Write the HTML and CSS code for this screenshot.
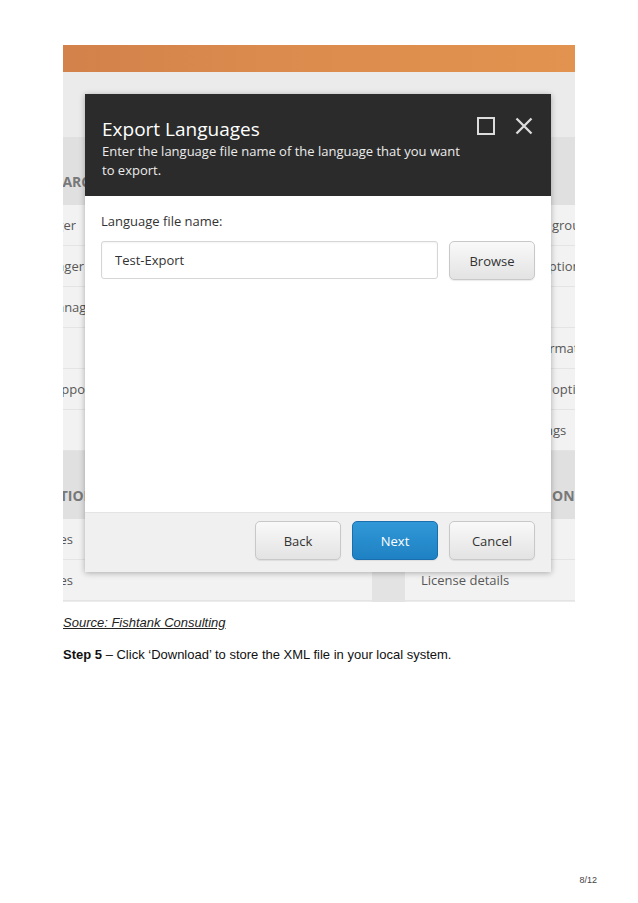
FILE: index.html
```html
<!DOCTYPE html>
<html lang="en">
<head>
    <meta charset="UTF-8">
    <meta name="viewport" content="width=device-width, initial-scale=1.0">
    <title>Step 5 – Export Languages</title>
    <link rel="stylesheet" href="styles.css">
</head>
<body>
    <div class="page">
        <div class="shot">
            <div class="topbar"></div>
            <div class="ribbon"></div>
            <div class="panels">
                <div class="col left">
                    <div class="head"><span class="lbl w-search">SEARCH</span></div>
                    <div class="row"><span class="lbl w-role">Role Manager</span></div>
                    <div class="row"><span class="lbl w-domain">Domain Manager</span></div>
                    <div class="row"><span class="lbl w-security">Security Manager</span></div>
                    <div class="row"></div>
                    <div class="row"><span class="lbl w-support">Support</span></div>
                    <div class="row"></div>
                    <div class="head"><span class="lbl w-local">LOCALIZATION</span></div>
                    <div class="row"><span class="lbl w-es">Roles</span></div>
                    <div class="row"><span class="lbl w-es">Files</span></div>
                </div>
                <div class="gutter"></div>
                <div class="col right">
                    <div class="head"></div>
                    <div class="row"><span class="tail at-groups">groups</span></div>
                    <div class="row"><span class="tail at-options">options</span></div>
                    <div class="row"></div>
                    <div class="row"><span class="tail at-formats">formats</span></div>
                    <div class="row"><span class="tail at-groups">options</span></div>
                    <div class="row"><span class="tail at-settings">settings</span></div>
                    <div class="head"><span class="tail at-groups">ON</span></div>
                    <div class="row"></div>
                    <div class="row">License details</div>
                </div>
            </div>

            <div class="dialog">
                <div class="dialog-head">
                    <div class="dialog-titles">
                        <h1 class="dialog-title">Export Languages</h1>
                        <p class="dialog-sub">Enter the language file name of the language that you want to export.</p>
                    </div>
                    <div class="dialog-tools">
                        <svg width="18" height="18" viewBox="0 0 18 18"><rect x="1" y="1" width="16" height="16" fill="none" stroke="#dcdcdc" stroke-width="2"/></svg>
                        <svg width="18" height="18" viewBox="0 0 18 18"><path d="M1.5 1.5L16.5 16.5M16.5 1.5L1.5 16.5" stroke="#dcdcdc" stroke-width="2.3" fill="none"/></svg>
                    </div>
                </div>
                <div class="dialog-body">
                    <label class="field-label" for="filename">Language file name:</label>
                    <div class="field-row">
                        <input class="field" id="filename" type="text" value="Test-Export">
                        <button class="btn">Browse</button>
                    </div>
                </div>
                <div class="dialog-foot">
                    <button class="btn">Back</button>
                    <button class="btn primary">Next</button>
                    <button class="btn">Cancel</button>
                </div>
            </div>
        </div>

        <p class="source"><a href="#">Source: Fishtank Consulting</a></p>
        <p class="step"><b>Step 5</b> – Click ‘Download’ to store the XML file in your local system.</p>
        <div class="pageno">8/12</div>
    </div>
</body>
</html>
```

FILE: styles.css
```css
body {
    margin: 0;
    background: #ffffff;
}
.page {
    min-height: 903px;
    box-sizing: border-box;
    padding: 45px 41px 17px 63px;
    display: flex;
    flex-direction: column;
    font-family: "Liberation Sans", Arial, sans-serif;
    color: #1a1a1a;
}

/* screenshot of the control panel */
.shot {
    position: relative;
    width: 512px;
    height: 557px;
    overflow: hidden;
    display: flex;
    flex-direction: column;
    background: #ebebeb;
    font-family: "Open Sans", sans-serif;
}
.topbar {
    height: 27px;
    background: linear-gradient(90deg, #d2824a, #db8b4d 40%, #e2934f);
}
.ribbon {
    height: 65px;
    background: #ebebeb;
}
.panels {
    flex: 1;
    display: grid;
    grid-template-columns: 309px 33px 1fr;
}
.gutter {
    background: #e3e3e3;
}
.col {
    display: flex;
    flex-direction: column;
    min-width: 0;
}
.head {
    height: 68px;
    box-sizing: border-box;
    display: flex;
    align-items: flex-end;
    padding-bottom: 13px;
    background: #e0e0e0;
    font-size: 14px;
    line-height: 20px;
    font-weight: 700;
    color: #787878;
    white-space: nowrap;
}
.row {
    height: 41px;
    box-sizing: border-box;
    display: flex;
    align-items: center;
    background: #f2f2f2;
    border-bottom: 1px solid #e4e4e4;
    font-size: 13px;
    color: #585858;
    white-space: nowrap;
}
.right .row {
    padding-left: 16px;
}
.right .head {
    padding-left: 16px;
}
.lbl {
    display: flex;
    justify-content: flex-end;
    overflow: hidden;
    white-space: nowrap;
}
.w-search { width: 38px; }
.w-role { width: 13px; }
.w-domain { width: 21px; }
.w-security { width: 36px; }
.w-support { width: 32px; }
.w-local { width: 32px; }
.w-es { width: 10px; }

.at-groups { margin-left: 131px; }
.at-options { margin-left: 120px; }
.at-formats { margin-left: 116px; }
.at-settings { margin-left: 98px; }

/* modal */
.dialog {
    position: absolute;
    left: 22px;
    top: 49px;
    width: 466px;
    height: 478px;
    display: flex;
    flex-direction: column;
    background: #ffffff;
    box-shadow: 0 1px 6px rgba(0, 0, 0, 0.3);
}
.dialog-head {
    height: 102px;
    box-sizing: border-box;
    display: flex;
    padding: 22px 18px 0 17px;
    background: #2b2b2b;
}
.dialog-titles {
    flex: 1;
}
.dialog-title {
    margin: 0;
    font-size: 19px;
    font-weight: 400;
    line-height: 26px;
    color: #ffffff;
}
.dialog-sub {
    margin: 0;
    max-width: 365px;
    font-size: 13px;
    line-height: 19px;
    color: #ececec;
}
.dialog-tools {
    display: flex;
    gap: 20px;
    padding-top: 1px;
}
.dialog-body {
    flex: 1;
    padding: 16px 16px 0;
}
.field-label {
    display: block;
    margin-bottom: 11px;
    font-size: 13px;
    line-height: 18px;
    color: #333333;
}
.field-row {
    display: flex;
    gap: 11px;
    align-items: flex-start;
}
.field {
    flex: 1;
    min-width: 0;
    height: 38px;
    box-sizing: border-box;
    padding: 0 13px;
    border: 1px solid #d6d6d6;
    border-radius: 3px;
    box-shadow: inset 0 1px 2px rgba(0, 0, 0, 0.05);
    font-family: "Open Sans", sans-serif;
    font-size: 13px;
    color: #333333;
}
.btn {
    width: 86px;
    height: 39px;
    box-sizing: border-box;
    border: 1px solid #c8c8c8;
    border-radius: 5px;
    background: linear-gradient(#f9f9f9, #e3e3e3);
    box-shadow: 0 1px 1px rgba(0, 0, 0, 0.08);
    font-family: "Open Sans", sans-serif;
    font-size: 13px;
    color: #333333;
    cursor: pointer;
}
.btn.primary {
    border-color: #1b6eae;
    background: linear-gradient(#3198d7, #1e81c3);
    color: #ffffff;
}
.dialog-foot {
    height: 60px;
    box-sizing: border-box;
    display: flex;
    justify-content: flex-end;
    align-items: flex-start;
    gap: 11px;
    padding: 8px 16px 0;
    border-top: 1px solid #e4e4e4;
    background: #f0f0f0;
}

/* document text */
.source {
    margin: 13px 0 0;
    font-size: 13px;
    line-height: 16px;
    font-style: italic;
}
.source a {
    color: #222222;
}
.step {
    margin: 16px 0 0;
    font-size: 13px;
    line-height: 16px;
    color: #111111;
}
.pageno {
    margin-top: auto;
    align-self: flex-end;
    font-size: 9px;
    line-height: 12px;
    color: #444444;
}
```
